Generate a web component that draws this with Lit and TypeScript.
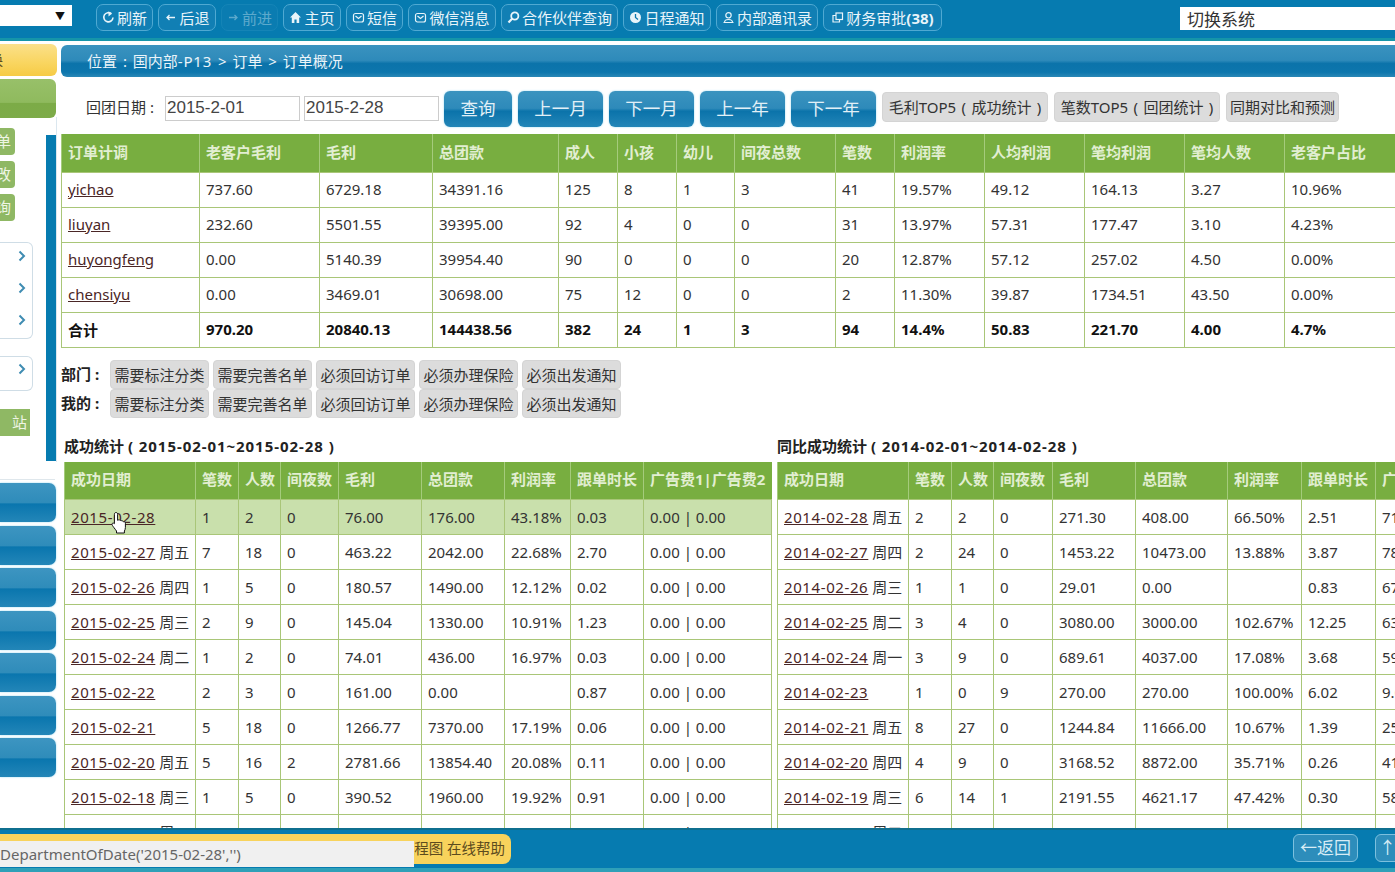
import { LitElement, html, css, svg } from 'lit';
import { customElement } from "lit/decorators.js";

const icons: Record<string, unknown> = {
  refresh: svg`<path d="M9.5 2.8A4.6 4.6 0 1 0 11 6.5" fill="none" stroke="currentColor" stroke-width="1.6"/><path d="M6.5 .5v5l3-2.5z" fill="currentColor"/>`,
  back: svg`<path d="M11 6.5H3M5.5 4 3 6.5 5.5 9" fill="none" stroke="currentColor" stroke-width="1.3"/>`,
  forward: svg`<path d="M2 6.5h8M7.5 4 10 6.5 7.5 9" fill="none" stroke="currentColor" stroke-width="1.3"/>`,
  home: svg`<path d="M6.5 1 1 6.5h1.8V12h2.6V8.500h2.200V12h2.600V6.500H12z" fill="currentColor"/>`,
  mail: svg`<rect x="1.500" y="2.500" width="10" height="8.500" rx="2" fill="none" stroke="currentColor" stroke-width="1.200"/><path d="M3.500 5l3 2.500 3-2.500" fill="none" stroke="currentColor" stroke-width="1.200"/>`,
  search: svg`<circle cx="7.800" cy="5" r="3.600" fill="none" stroke="currentColor" stroke-width="1.800"/><path d="M5.300 7.500 1.500 11.500" stroke="currentColor" stroke-width="2.200"/>`,
  clock: svg`<circle cx="6.500" cy="6.500" r="5.500" fill="currentColor"/><path d="M6.500 3v3.500l2.500 2" fill="none" stroke="#0b76ad" stroke-width="1.300"/>`,
  user: svg`<circle cx="6.500" cy="4.300" r="2.700" fill="none" stroke="currentColor" stroke-width="1.200"/><path d="M1.500 11.500h10M2.500 11.500c0-2 1.500-3 4-3s4 1 4 3" fill="none" stroke="currentColor" stroke-width="1.200"/>`,
  copy: svg`<rect x="5" y="2" width="6.500" height="6.500" fill="none" stroke="currentColor" stroke-width="1.200"/><path d="M5 4.500H2V11h6.500V8.500" fill="none" stroke="currentColor" stroke-width="1.200"/>`,
};

const tools = [
  { icon: "refresh", label: "刷新", w: 57 },
  { icon: "back", label: "后退", w: 58 },
  { icon: "forward", label: "前进", w: 57, off: true },
  { icon: "home", label: "主页", w: 58 },
  { icon: "mail", label: "短信", w: 57 },
  { icon: "mail", label: "微信消息", w: 88 },
  { icon: "search", label: "合作伙伴查询", w: 117 },
  { icon: "clock", label: "日程通知", w: 88 },
  { icon: "user", label: "内部通讯录", w: 102 },
  { icon: "copy", label: "财务审批", extra: "(38)", w: 119 },
];

const topCols = [138, 120, 113, 126, 59, 59, 58, 101, 59, 90, 100, 100, 100, 120];
const topHead = ["订单计调", "老客户毛利", "毛利", "总团款", "成人", "小孩", "幼儿", "间夜总数", "笔数", "利润率", "人均利润", "笔均利润", "笔均人数", "老客户占比"];
const topRows = [
  ["yichao", "737.60", "6729.18", "34391.16", "125", "8", "1", "3", "41", "19.57%", "49.12", "164.13", "3.27", "10.96%"],
  ["liuyan", "232.60", "5501.55", "39395.00", "92", "4", "0", "0", "31", "13.97%", "57.31", "177.47", "3.10", "4.23%"],
  ["huyongfeng", "0.00", "5140.39", "39954.40", "90", "0", "0", "0", "20", "12.87%", "57.12", "257.02", "4.50", "0.00%"],
  ["chensiyu", "0.00", "3469.01", "30698.00", "75", "12", "0", "0", "2", "11.30%", "39.87", "1734.51", "43.50", "0.00%"],
];
const topTotal = ["合计", "970.20", "20840.13", "144438.56", "382", "24", "1", "3", "94", "14.4%", "50.83", "221.70", "4.00", "4.7%"];

const statHead = ["成功日期", "笔数", "人数", "间夜数", "毛利", "总团款", "利润率", "跟单时长", "广告费1|广告费2"];
const leftCols = [131, 43, 42, 58, 83, 83, 66, 73, 128];
const rightCols = [131, 43, 42, 59, 83, 92, 74, 74, 128];

const leftRows = [
  ["2015-02-28", "", "1", "2", "0", "76.00", "176.00", "43.18%", "0.03", "0.00 | 0.00"],
  ["2015-02-27", "周五", "7", "18", "0", "463.22", "2042.00", "22.68%", "2.70", "0.00 | 0.00"],
  ["2015-02-26", "周四", "1", "5", "0", "180.57", "1490.00", "12.12%", "0.02", "0.00 | 0.00"],
  ["2015-02-25", "周三", "2", "9", "0", "145.04", "1330.00", "10.91%", "1.23", "0.00 | 0.00"],
  ["2015-02-24", "周二", "1", "2", "0", "74.01", "436.00", "16.97%", "0.03", "0.00 | 0.00"],
  ["2015-02-22", "", "2", "3", "0", "161.00", "0.00", "", "0.87", "0.00 | 0.00"],
  ["2015-02-21", "", "5", "18", "0", "1266.77", "7370.00", "17.19%", "0.06", "0.00 | 0.00"],
  ["2015-02-20", "周五", "5", "16", "2", "2781.66", "13854.40", "20.08%", "0.11", "0.00 | 0.00"],
  ["2015-02-18", "周三", "1", "5", "0", "390.52", "1960.00", "19.92%", "0.91", "0.00 | 0.00"],
  ["2015-02-16", "周一", "1", "3", "1", "78.00", "0.00", "", "0.00", "1.00 | 0.00"],
];
const rightRows = [
  ["2014-02-28", "周五", "2", "2", "0", "271.30", "408.00", "66.50%", "2.51", "71.00 | 0.00"],
  ["2014-02-27", "周四", "2", "24", "0", "1453.22", "10473.00", "13.88%", "3.87", "78.00 | 0.00"],
  ["2014-02-26", "周三", "1", "1", "0", "29.01", "0.00", "", "0.83", "67.00 | 0.00"],
  ["2014-02-25", "周二", "3", "4", "0", "3080.00", "3000.00", "102.67%", "12.25", "63.00 | 0.00"],
  ["2014-02-24", "周一", "3", "9", "0", "689.61", "4037.00", "17.08%", "3.68", "59.00 | 0.00"],
  ["2014-02-23", "", "1", "0", "9", "270.00", "270.00", "100.00%", "6.02", "9.00 | 0.00"],
  ["2014-02-21", "周五", "8", "27", "0", "1244.84", "11666.00", "10.67%", "1.39", "25.00 | 0.00"],
  ["2014-02-20", "周四", "4", "9", "0", "3168.52", "8872.00", "35.71%", "0.26", "41.00 | 0.00"],
  ["2014-02-19", "周三", "6", "14", "1", "2191.55", "4621.17", "47.42%", "0.30", "58.00 | 0.00"],
  ["2014-02-18", "周二", "2", "7", "1", "100.25", "758.00", "13.23%", "0.33", "41.00 | 0.00"],
];

const tags = ["需要标注分类", "需要完善名单", "必须回访订单", "必须办理保险", "必须出发通知"];

@customElement("app-root")
export class AppRoot extends LitElement {
  static styles = css`
    :host {
      display: flex;
      flex-direction: column;
      width: 1395px;
      height: 872px;
      overflow: hidden;
      position: relative;
      background: #fff;
      font-family: "Noto Sans", "Noto Sans CJK SC", sans-serif;
      font-size: 15px;
      color: #333;
    }
    a { color: #4a2626; text-decoration: underline; }
    .head {
      flex: none;
      height: 38px;
      box-sizing: content-box;
      background: #067bb0;
      border-bottom: 3px solid #1595a9;
      display: flex;
      align-items: flex-start;
    }
    .sel-left {
      width: 72px;
      height: 21px;
      margin-top: 5px;
      background: #fff;
      display: flex;
      justify-content: flex-end;
      align-items: center;
      padding-right: 7px;
      box-sizing: border-box;
      font-size: 10px;
      color: #111;
    }
    .tools { display: flex; gap: 5px; margin: 4px 0 0 24px; }
    .tool {
      height: 27px;
      box-sizing: border-box;
      border: 1px solid #4fa9d2;
      border-radius: 7px;
      background: #117fb4;
      color: #e8f4fa;
      display: flex;
      align-items: center;
      justify-content: center;
      gap: 2px;
      font-size: 15px;
      white-space: nowrap;
    }
    .tool svg { width: 13px; height: 13px; flex: none; }
    .tool.off { opacity: .38; border-color: #2f94c2; }
    .tool b { font-weight: 700; }
    .sel-right {
      margin: 7px 0 0 auto;
      width: 215px;
      height: 23px;
      background: #fff;
      color: #333;
      font-size: 17px;
      line-height: 25px;
      padding-left: 7px;
      box-sizing: border-box;
      overflow: hidden;
    }

    .body { flex: none; height: 787px; display: flex; overflow: hidden; }
    .side {
      flex: none;
      width: 57px;
      padding-top: 3px;
      box-sizing: border-box;
      display: flex;
      flex-direction: column;
    }
    .side-yellow {
      height: 32px;
      border-radius: 0 6px 6px 0;
      background: linear-gradient(#fbe08a, #f9d55f 60%, #f6cb45 100%);
      font-size: 14px;
      line-height: 32px;
      color: #5a4a20;
      text-indent: -11px;
      overflow: hidden;
    }
    .side-green {
      margin-top: 3px;
      height: 39px;
      width: 56px;
      border-radius: 0 6px 6px 0;
      background: linear-gradient(#98c069, #8fba5e 60%, #7cab47 62%, #7dab49 100%);
    }
    .side-mid { display: flex; height: 345px; margin-top: -1px; border-right: 1px solid #dbe7ef; }
    .side-list {
      width: 46px;
      flex: none;
      display: flex;
      flex-direction: column;
      padding-top: 11px;
      box-sizing: border-box;
    }
    .mini {
      width: 15px;
      height: 27px;
      margin-bottom: 6px;
      background: #8fb864;
      border-radius: 0 4px 4px 0;
      color: #eef5e4;
      font-size: 15px;
      line-height: 26px;
      text-indent: -4px;
      overflow: hidden;
    }
    .panel {
      width: 33px;
      box-sizing: border-box;
      border: 1px solid #cfdde6;
      border-left: 0;
      border-radius: 0 6px 6px 0;
      display: flex;
      flex-direction: column;
      align-items: flex-end;
      padding-right: 6px;
      color: #3f8cb2;
    }
    .panel svg { width: 8px; height: 12px; display: block; }
    .panel.p1 { height: 97px; margin-top: 15px; padding-top: 7px; gap: 20px; }
    .panel.p2 { height: 35px; margin-top: 17px; padding-top: 6px; }
    .mini.wide {
      width: 30px;
      margin: 18px 0 0;
      border-radius: 0;
      text-indent: 12px;
    }
    .side-bar { width: 10px; flex: none; margin-top: 18px; height: 326px; background: #067bb0; }
    .side-rule { height: 1px; background: #dfe7ec; margin: 17px 2px 3px 0; }
    .nav {
      height: 39px;
      width: 56px;
      flex: none;
      margin-bottom: 3.500px;
      border-radius: 0 7px 7px 0;
      background: linear-gradient(#3d95c1, #2f8cba 50%, #0a76ae 54%, #2386b8 100%);
      box-shadow: 0 0 2px #8fd3ee;
    }

    .main {
      flex: 1;
      min-width: 0;
      margin-left: 4px;
      padding-top: 4px;
      overflow: hidden;
    }
    .crumb {
      height: 32px;
      border-radius: 6px 0 0 6px;
      background: linear-gradient(#3a93bf, #2e8aba 48%, #0b73aa 58%, #0d76ad 85%, #2a87b6 100%);
      color: #eaf4f9;
      line-height: 32px;
      padding-left: 26px;
      font-size: 15px;
      word-spacing: 2px;
      white-space: pre;
    }
    .crumb span { letter-spacing: .8px; }
    .filter {
      margin-top: 14px;
      height: 36px;
      display: flex;
      align-items: flex-start;
      padding-left: 25px;
    }
    .filter label { width: 79px; line-height: 33px; flex: none; font-size: 15px; }
    .filter .date {
      width: 135px;
      height: 25px;
      box-sizing: border-box;
      margin: 5px 4px 0 0;
      border: 1px solid #ccc;
      font-family: "Liberation Sans", sans-serif;
      font-size: 17px;
      line-height: 22px;
      padding-left: 1px;
      color: #444;
    }
    .big {
      height: 36px;
      width: 85px;
      margin-right: 6px;
      border-radius: 6px;
      background: linear-gradient(#3a93bf, #2e8aba 48%, #0b73aa 56%, #2386b8 100%);
      box-shadow: 0 0 2px #8fd3ee;
      color: #e2f0f7;
      font-size: 17.500px;
      line-height: 34px;
      text-align: center;
      flex: none;
    }
    .big.first { width: 68px; margin-left: 1px; }
    .gray {
      height: 30px;
      box-sizing: border-box;
      border-radius: 4px;
      background: #dcdcdc;
      border: 1px solid #d4d4d4;
      color: #333;
      line-height: 28px;
      text-align: center;
      white-space: nowrap;
      flex: none;
      font-size: 15px;
    }
    .filter .gray { margin: 1px 6px 0 0; word-spacing: 1.500px; }

    table { border-collapse: collapse; table-layout: fixed; }
    th {
      background: #78ae40;
      color: #e2eed2;
      height: 38px;
      box-sizing: border-box;
      padding: 0 0 3px 6px;
      text-align: left;
      font-weight: 700;
      font-size: 15px;
      border-left: 1px solid #a5cb7c;
      white-space: nowrap;
      overflow: hidden;
    }
    td {
      height: 35px;
      box-sizing: border-box;
      padding: 0 0 1px 6px;
      border: 1px solid #a9c678;
      white-space: nowrap;
      overflow: hidden;
      font-size: 15px;
    }
    .top { margin-top: 7px; width: 1343px; }
    .top td.total { font-weight: 700; color: #111; }

    .tagrow { display: flex; height: 29px; align-items: stretch; }
    .tags { margin-top: 12px; }
    .tagrow span {
      width: 49px;
      flex: none;
      font-weight: 700;
      color: #222;
      line-height: 29px;
      font-size: 15px;
      white-space: pre;
    }
    .tagrow .gray { width: 99px; height: 29px; margin-right: 4px; font-size: 15px; }

    .stats { display: flex; gap: 5px; margin-top: 17px; padding-left: 3px; width: 1500px; }
    .stat { flex: none; }
    .stat.left { width: 708px; }
    .title { font-weight: 700; color: #222; font-size: 15px; height: 22px; line-height: 22px; margin-bottom: 5px; white-space: pre; }
    .range { letter-spacing: .95px; }
    tr.on td { background: #c9e0ac; }
    td.date-cell { position: relative; overflow: visible; }
    td.date-cell a { letter-spacing: .6px; }
    .hand { position: absolute; left: 46px; top: 11px; width: 17px; height: 24px; }
    .week { margin-left: 4px; }

    .foot {
      flex: none;
      height: 44px;
      box-sizing: border-box;
      background: #067bb0;
      border-top: 2px solid #0f6f8f;
      box-shadow: inset 0 -4px 0 #2fa0b8;
      display: flex;
      align-items: flex-start;
    }
    .helper {
      width: 511px;
      height: 30px;
      margin-top: 4px;
      box-sizing: border-box;
      background: #f8d35c;
      border-radius: 0 8px 8px 0;
      color: #5c4b1e;
      text-align: right;
      line-height: 28px;
      padding-right: 6px;
      flex: none;
      font-size: 14.500px;
    }
    .foot-btn {
      flex: none;
      height: 28px;
      box-sizing: border-box;
      margin-top: 4px;
      border: 1px solid #7cc0de;
      border-radius: 6px;
      background: #2d8dbb;
      color: #d8ecf5;
      font-size: 17px;
      line-height: 25px;
      text-align: center;
      white-space: nowrap;
      overflow: hidden;
    }
    .foot-btn.back { width: 65px; margin-left: auto; }
    .foot-btn.up { width: 30px; margin: 4px -10px 0 17px; padding-left: 3px; text-align: left; }
    .status {
      position: absolute;
      left: 0;
      top: 841px;
      width: 414px;
      height: 26px;
      background: #f0f0f0;
      color: #666;
      font-size: 15px;
      line-height: 26px;
      white-space: nowrap;
      overflow: hidden;
    }
  `;

  icon(name: string) {
    return html`<svg viewBox="0 0 13 13">${icons[name]}</svg>`;
  }

  chevron() {
    return html`<svg viewBox="0 0 8 12"><path d="M1.500 1.500 6 6l-4.500 4.500" fill="none" stroke="currentColor" stroke-width="2"/></svg>`;
  }

  cols(list: number[]) {
    return html`<colgroup>${list.map((w) => html`<col style="width:${w}px">`)}</colgroup>`;
  }

  statTable(cols: number[], rows: string[][], marked: boolean) {
    const width = cols.reduce((a, b) => a + b, 0);
    return html`<table style="width:${width}px">
      ${this.cols(cols)}
      <tr>${statHead.map((h) => html`<th>${h}</th>`)}</tr>
      ${rows.map((r, i) => html`<tr class=${marked && i === 0 ? "on" : ""}>
        <td class="date-cell"><a>${r[0]}</a>${r[1] ? html`<span class="week">${r[1]}</span>` : ""}${marked && i === 0
          ? html`<svg class="hand" viewBox="0 0 17 24"><path d="M5 1.500c1 0 1.600.8 1.600 1.800v6l1-.4c.6-.2 1.300 0 1.500.6.500-.3 1.400-.2 1.700.5.600-.2 1.400 0 1.700.7.700-.2 1.900.2 1.900 1.500v4.300c0 1.500-.5 2.500-1 3.500v2H5.500v-2C4.800 19 3.800 17.800 2.700 16.300 1.800 15 .8 13.800 1 13c.2-1 1.400-1.200 2.200-.5l.2.200V3.300C3.400 2.300 4 1.500 5 1.500z" fill="#fff" stroke="#111" stroke-width="1"/></svg>`
          : ""}</td>
        ${r.slice(2).map((c) => html`<td>${c}</td>`)}
      </tr>`)}
    </table>`;
  }

  render() {
    return html`
      <div class="head">
        <div class="sel-left">▼</div>
        <div class="tools">
          ${tools.map((t) => html`<div class="tool ${t.off ? "off" : ""}" style="width:${t.w}px">
            ${this.icon(t.icon)}<span>${t.label}${t.extra ? html`<b>${t.extra}</b>` : ""}</span>
          </div>`)}
        </div>
        <div class="sel-right">切换系统</div>
      </div>
      <div class="body">
        <div class="side">
          <div class="side-yellow">换</div>
          <div class="side-green"></div>
          <div class="side-mid">
            <div class="side-list">
              <div class="mini">单</div>
              <div class="mini">改</div>
              <div class="mini">询</div>
              <div class="panel p1">${this.chevron()}${this.chevron()}${this.chevron()}</div>
              <div class="panel p2">${this.chevron()}</div>
              <div class="mini wide">站</div>
            </div>
            <div class="side-bar"></div>
          </div>
          <div class="side-rule"></div>
          ${[1, 2, 3, 4, 5, 6, 7].map(() => html`<div class="nav"></div>`)}
        </div>
        <div class="main">
          <div class="crumb">位置 : 国内部<span>-P13</span> &gt; 订单 &gt; 订单概况</div>
          <div class="filter">
            <label>回团日期 :</label>
            <div class="date">2015-2-01</div>
            <div class="date">2015-2-28</div>
            <div class="big first">查询</div>
            <div class="big">上一月</div>
            <div class="big">下一月</div>
            <div class="big">上一年</div>
            <div class="big">下一年</div>
            <div class="gray" style="width:166px">毛利TOP5 ( 成功统计 )</div>
            <div class="gray" style="width:166px">笔数TOP5 ( 回团统计 )</div>
            <div class="gray" style="width:113px">同期对比和预测</div>
          </div>
          <table class="top">
            ${this.cols(topCols)}
            <tr>${topHead.map((h) => html`<th>${h}</th>`)}</tr>
            ${topRows.map((r) => html`<tr>${r.map((c, i) => html`<td>${i === 0 ? html`<a>${c}</a>` : c}</td>`)}</tr>`)}
            <tr>${topTotal.map((c) => html`<td class="total">${c}</td>`)}</tr>
          </table>
          <div class="tags">
            ${["部门 :", "我的 :"].map((l) => html`<div class="tagrow">
              <span>${l}</span>
              ${tags.map((t) => html`<div class="gray">${t}</div>`)}
            </div>`)}
          </div>
          <div class="stats">
            <div class="stat left">
              <div class="title">成功统计 <span class="range">( 2015-02-01~2015-02-28 )</span></div>
              ${this.statTable(leftCols, leftRows, true)}
            </div>
            <div class="stat">
              <div class="title">同比成功统计 <span class="range">( 2014-02-01~2014-02-28 )</span></div>
              ${this.statTable(rightCols, rightRows, false)}
            </div>
          </div>
        </div>
      </div>
      <div class="foot">
        <div class="helper">流程图 在线帮助</div>
        <div class="foot-btn back">←返回</div>
        <div class="foot-btn up">↑顶</div>
      </div>
      <div class="status">DepartmentOfDate('2015-02-28','')</div>
    `;
  }
}
